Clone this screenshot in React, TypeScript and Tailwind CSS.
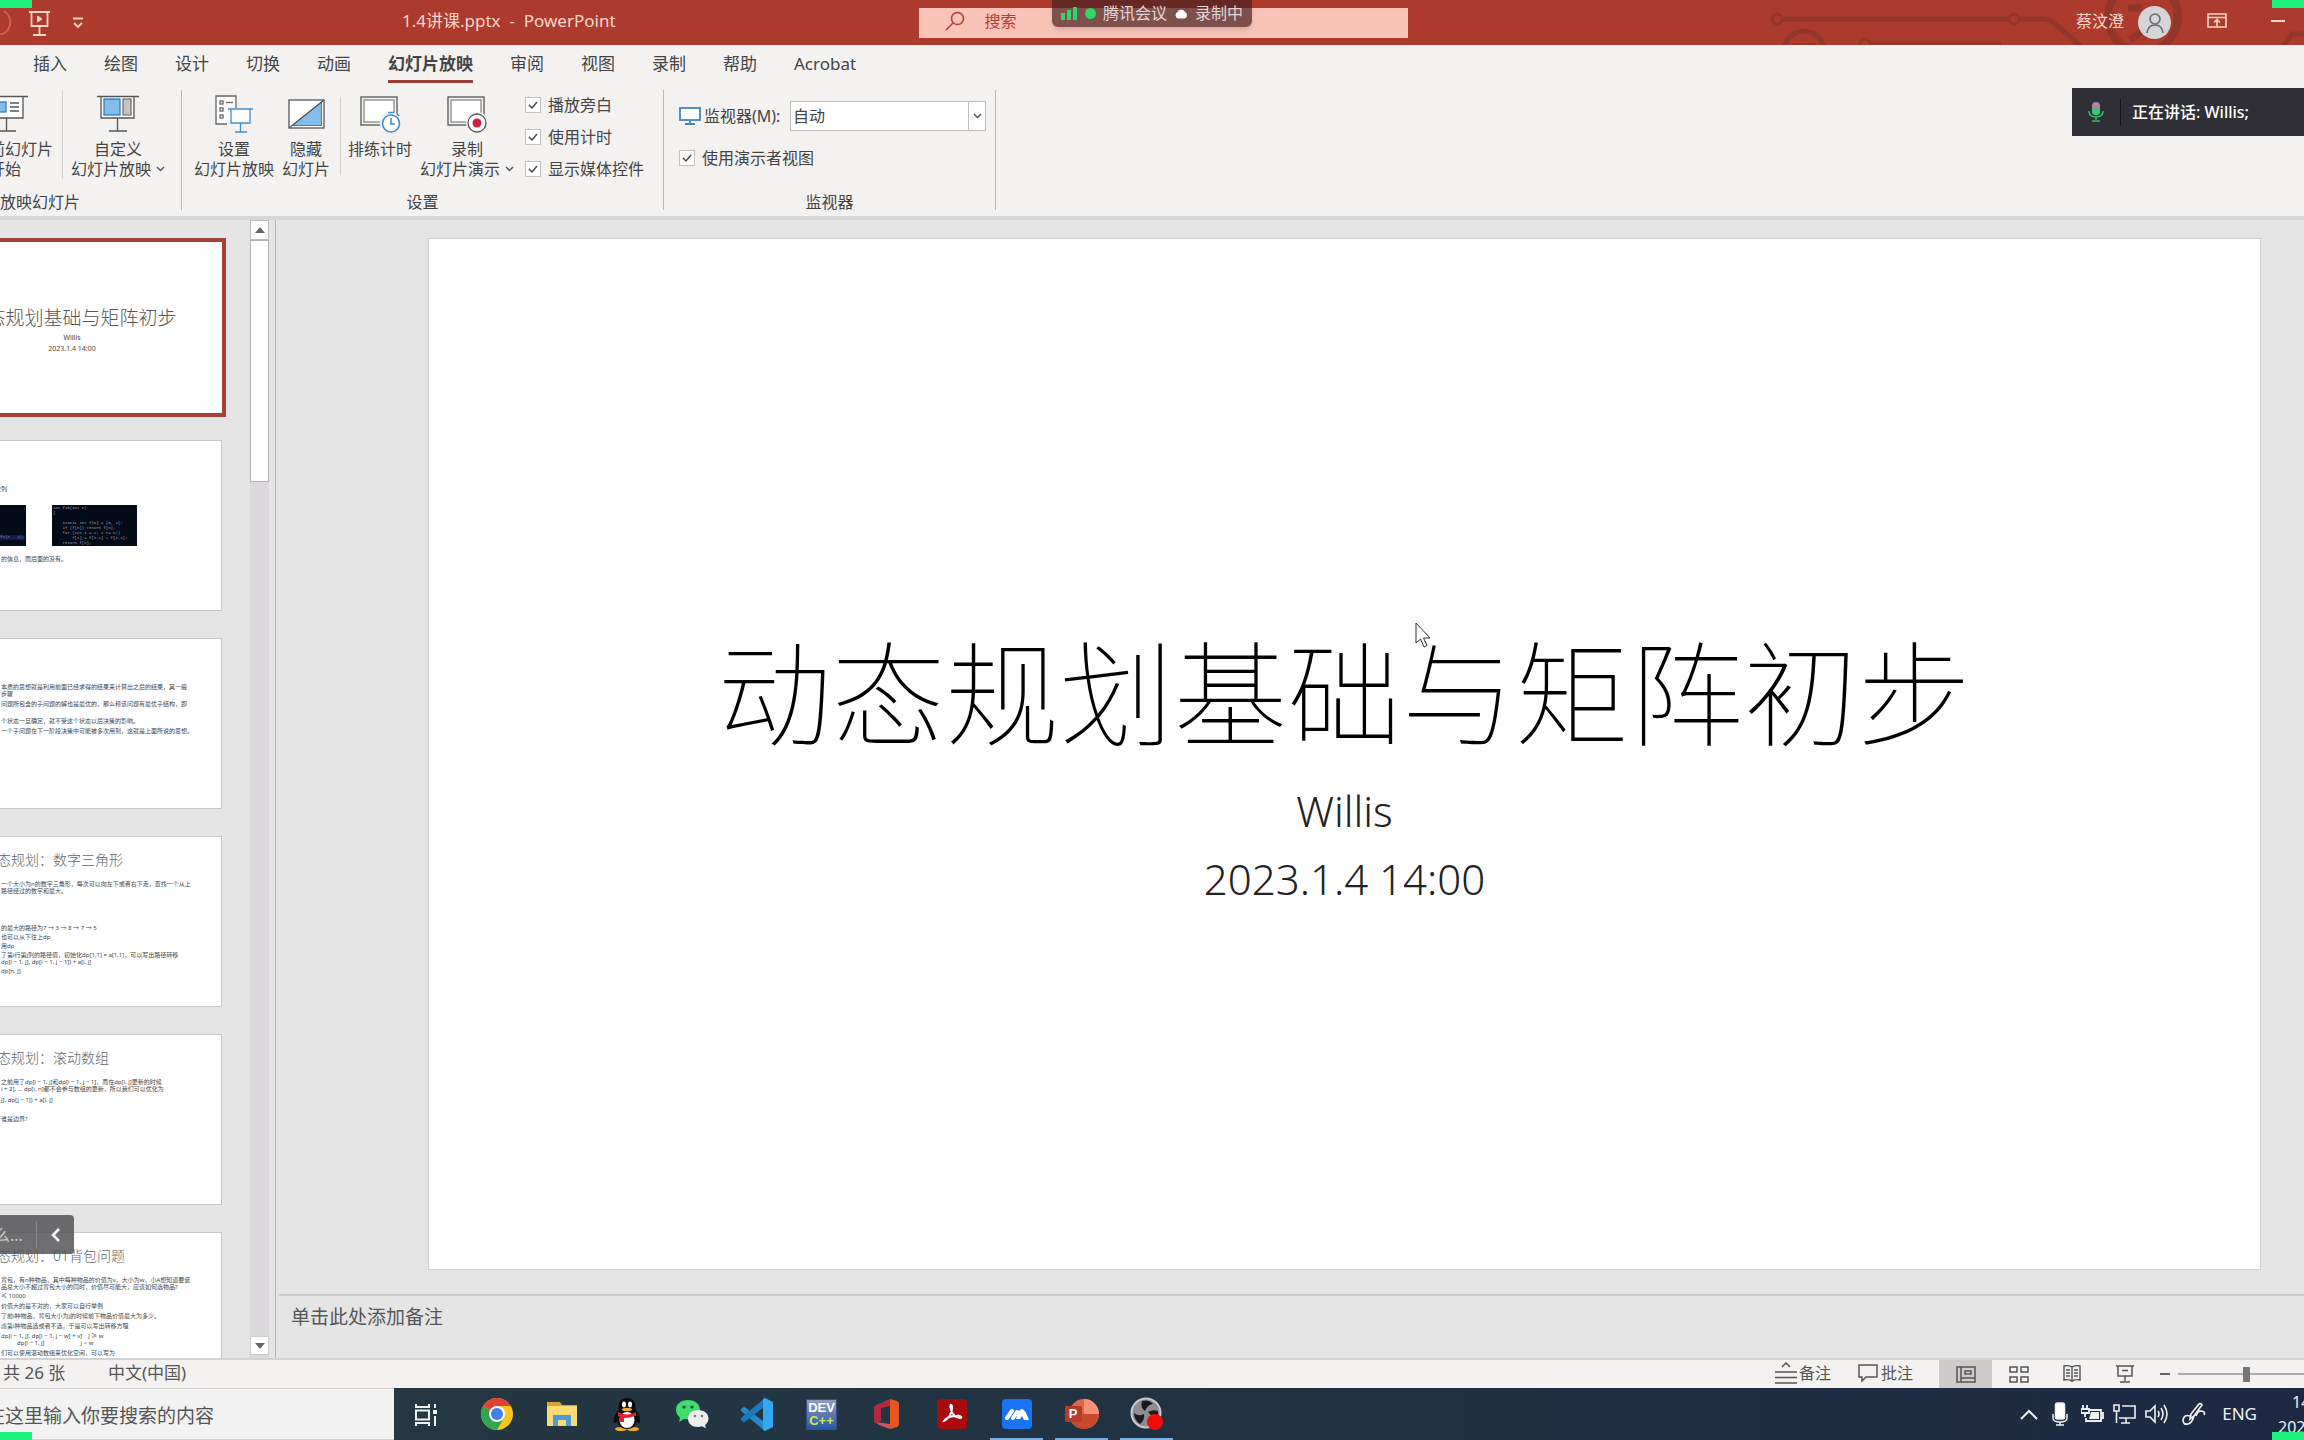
import React, { type ReactNode } from 'react';

const TABS = ['插入', '绘图', '设计', '切换', '动画', '幻灯片放映', '审阅', '视图', '录制', '帮助', 'Acrobat'];

const Caret = ({ className = '' }: { className?: string }) => (
  <svg width="9" height="6" viewBox="0 0 9 6" fill="none" stroke="#555" strokeWidth="1.5" className={className}>
    <path d="M1 1l3.5 3.5L8 1" />
  </svg>
);

function RibbonButton({ icon, lines, caret, className }: { icon: ReactNode; lines: string[]; caret?: boolean; className: string }) {
  return (
    <button className={`flex shrink-0 flex-col items-center whitespace-nowrap pt-[3px] text-[16px] leading-5 ${className}`}>
      <span className="mb-1 flex h-[42px] items-center">{icon}</span>
      {lines.map((line, i) => (
        <span key={line} className="flex items-center gap-[5px]">
          {line}
          {caret && i === lines.length - 1 && <Caret />}
        </span>
      ))}
    </button>
  );
}

function Check({ label }: { label: string }) {
  return (
    <label className="flex h-8 items-center gap-[7px] whitespace-nowrap text-[16px]">
      <span className="relative flex h-4 w-4">
        <input type="checkbox" defaultChecked className="h-4 w-4 appearance-none border border-[#c4c2c0] bg-white" />
        <svg viewBox="0 0 16 16" className="pointer-events-none absolute inset-0" fill="none" stroke="#444" strokeWidth="1.5">
          <path d="M4 8l3 3 5-6" />
        </svg>
      </span>
      {label}
    </label>
  );
}

const BoardIcon = () => (
  <svg width="42" height="38" viewBox="0 0 42 38" fill="none" stroke="#555" strokeWidth="1.3">
    <path d="M4 1.5V23h33V1.5" fill="#fff" />
    <path d="M0 1.5h42M20.5 23v13M12 36h18" />
    <rect x="7" y="4" width="16" height="16" fill="#83bdea" stroke="#2f7cc0" />
    <rect x="26" y="4" width="8" height="16" fill="#c8c4c0" stroke="#77736f" />
  </svg>
);

const FromCurrentIcon = () => (
  <svg width="42" height="38" viewBox="0 0 42 38" fill="none" stroke="#555" strokeWidth="1.3">
    <path d="M4 1.5V23h33V1.5" fill="#fff" />
    <path d="M0 1.5h42M20.5 23v13M12 36h18M24 8h9M24 12h9M24 16h9" />
    <rect x="8" y="7" width="12" height="10" fill="#83bdea" stroke="#2f7cc0" />
  </svg>
);

const SetupIcon = () => (
  <svg width="38" height="38" viewBox="0 0 38 38" fill="none" stroke="#666" strokeWidth="1.3">
    <path d="M12 29H1V1h20v12" fill="#fff" />
    <rect x="5" y="6" width="3" height="3" />
    <rect x="5" y="13" width="3" height="3" />
    <rect x="5" y="20" width="3" height="3" />
    <path d="M11 7.5h7" />
    <g stroke="#3f8fce">
      <path d="M16 14v14h19V14" fill="#fff" />
      <path d="M13 14h25M25.5 28v8.5M20 37h12" />
    </g>
  </svg>
);

const HideIcon = () => (
  <svg width="37" height="30" viewBox="0 0 37 30" fill="none" stroke="#555" strokeWidth="1.3">
    <rect x="1" y="1" width="35" height="28" fill="#fff" />
    <path d="M4 26.5L33.500 3v23.500z" fill="#83bdea" stroke="#2f7cc0" strokeWidth="1" />
    <path d="M1 29L36 1" />
  </svg>
);

const RehearseIcon = () => (
  <svg width="42" height="37" viewBox="0 0 42 37" fill="none" stroke="#555" strokeWidth="1.3">
    <rect x="2" y="1" width="36" height="28" />
    <rect x="5" y="4" width="30" height="22" fill="#fff" stroke="#888" />
    <circle cx="32" cy="27" r="11" fill="#f3f2f1" stroke="none" />
    <circle cx="32" cy="27.500" r="8.500" fill="#fff" stroke="#3f8fce" strokeWidth="1.600" />
    <path d="M32 22v6h4M29 16.500h6M38 18l2 2" stroke="#3f8fce" strokeWidth="1.600" />
  </svg>
);

const RecordIcon = () => (
  <svg width="42" height="37" viewBox="0 0 42 37" fill="none" stroke="#555" strokeWidth="1.3">
    <rect x="2" y="1" width="36" height="28" />
    <rect x="5" y="4" width="30" height="22" fill="#fff" stroke="#888" />
    <circle cx="31" cy="27" r="11" fill="#f3f2f1" stroke="none" />
    <circle cx="31" cy="27" r="9" fill="#fff" />
    <circle cx="31" cy="27" r="4.500" fill="#d0213c" stroke="none" />
  </svg>
);

function TitleBar() {
  return (
    <header className="relative flex h-[45px] shrink-0 overflow-hidden bg-[#ad3b2d] pb-[3px] text-[#fbd5cc]">
      <svg className="absolute right-0 top-0" width="560" height="45" viewBox="1744 0 560 45" fill="none" stroke="#93352a" strokeWidth="5">
        <circle cx="1777" cy="19" r="5" strokeWidth="3" />
        <path d="M1783 19h226M2020 19h24q6 0 12 6l26 22" />
        <circle cx="2014" cy="19" r="5" strokeWidth="3" />
        <circle cx="1804" cy="51" r="20" />
        <path d="M1793 46h22" />
        <circle cx="1865" cy="44" r="5" strokeWidth="3" />
        <path d="M1871 44h130" />
        <circle cx="2143" cy="17" r="35" strokeWidth="8" />
        <path d="M2128 8h14M2146 28l-16 12" strokeWidth="7" />
        <path d="M2282 48l10-14h14" />
      </svg>
      <div className="relative flex flex-1 items-center">
        <svg width="14" height="28" viewBox="0 0 14 28" fill="none" stroke="#d4604f" strokeWidth="2">
          <path d="M4 4a13 13 0 0 1 -5 24" />
        </svg>
        <button aria-label="从头开始" className="ml-[15px] pt-[3px]">
          <svg width="21" height="28" viewBox="0 0 21 28" fill="none" stroke="#fbd5cc" strokeWidth="1.800">
            <path d="M0 3h21M2.500 3v14h16V3M10.500 17v8M4 26h13" />
            <path d="M8.500 7v6l4.500-3z" fill="#fbd5cc" strokeWidth="1" />
          </svg>
        </button>
        <button aria-label="自定义快速访问工具栏" className="ml-[23px] pt-[3px]">
          <svg width="10" height="12" viewBox="0 0 10 12" fill="none" stroke="#fbd5cc" strokeWidth="1.800">
            <path d="M0 1.500h10M1 6l4 4 4-4" />
          </svg>
        </button>
        <h1 className="ml-[319px] whitespace-pre text-[17px] leading-6">1.4讲课.pptx  -  PowerPoint</h1>
      </div>
      <label className="relative ml-[22px] mt-2 flex h-[30px] w-[489px] shrink-0 items-center bg-[#f9c3b7] pb-1 pl-[26px]">
        <svg width="20" height="20" viewBox="0 0 20 20" fill="none" stroke="#b4402f" strokeWidth="1.600">
          <circle cx="12.500" cy="7.500" r="6" />
          <path d="M8 12l-7 7" />
        </svg>
        <input aria-label="搜索" placeholder="搜索" className="ml-5 w-40 bg-transparent text-[16px] placeholder:text-[#b4402f]" />
      </label>
      <div className="relative flex flex-1 items-center justify-end">
        <span className="text-[16px]">蔡汶澄</span>
        <span className="ml-[14px] mt-[3px] flex h-[33px] w-[33px] items-center justify-center rounded-full bg-[#d5d5d8]">
          <svg width="20" height="22" viewBox="0 0 20 22" fill="none" stroke="#666a75" strokeWidth="1.600">
            <circle cx="10" cy="7" r="5" />
            <path d="M2 21q1-8 8-8t8 8" />
          </svg>
        </span>
        <button aria-label="功能区显示选项" className="ml-9">
          <svg width="20" height="16" viewBox="0 0 20 16" fill="none" stroke="#fbd5cc" strokeWidth="1.600">
            <path d="M1 1h18v13H1zM1 4.500h18M10 13V7M7 9.500L10 6.500l3 3" />
          </svg>
        </button>
        <button aria-label="最小化" className="ml-11 mr-[19px] h-[2px] w-[14px] bg-[#fbd5cc]" />
      </div>
    </header>
  );
}

function Group({ label, className, children }: { label: string; className: string; children: ReactNode }) {
  return (
    <section className={`flex h-[120px] shrink-0 flex-col justify-between border-r border-[#b9b7b5] ${className}`}>
      <div className="flex">{children}</div>
      <div className="flex h-4 items-center justify-center whitespace-nowrap text-[16px]">{label}</div>
    </section>
  );
}

function Ribbon() {
  return (
    <div className="shrink-0 border-b-4 border-[#d6d6d6] bg-[#f3f2f1] text-[#444]">
      <nav className="flex h-[45px] gap-[37px] pl-[33px]">
        {TABS.map((t) => (
          <button
            key={t}
            className={`h-[38px] border-b-[3px] pt-[2px] text-[17px] ${t === '幻灯片放映' ? 'border-[#9c3f37] font-bold' : 'border-transparent'}`}
          >
            {t}
          </button>
        ))}
      </nav>
      <div className="flex h-[126px]">
        <Group label="开始放映幻灯片" className="w-[182px] [&>div:last-child]:mr-[101px] [&>div:last-child]:justify-end">
          <div className="flex w-[63px] justify-end border-r border-[#d4d2d0] pr-[12px]">
            <RibbonButton className="w-[90px]" icon={<span className="ml-1"><FromCurrentIcon /></span>} lines={['从当前幻灯片', '开始']} />
          </div>
          <RibbonButton className="ml-2" icon={<BoardIcon />} lines={['自定义', '幻灯片放映']} caret />
        </Group>
        <Group label="设置" className="w-[482px]">
          <RibbonButton className="ml-[12px]" icon={<SetupIcon />} lines={['设置', '幻灯片放映']} />
          <RibbonButton className="ml-2" icon={<HideIcon />} lines={['隐藏', '幻灯片']} />
          <div className="ml-[10px] mt-[7px] h-[78px] w-px bg-[#d4d2d0]" />
          <RibbonButton className="ml-[7px]" icon={<RehearseIcon />} lines={['排练计时']} />
          <RibbonButton className="ml-2" icon={<RecordIcon />} lines={['录制', '幻灯片演示']} caret />
          <div className="ml-[11px] -mt-px">
            <Check label="播放旁白" />
            <Check label="使用计时" />
            <Check label="显示媒体控件" />
          </div>
        </Group>
        <Group label="监视器" className="w-[332px]">
          <div className="ml-[15px] flex flex-col">
            <label className="mt-[11px] flex h-[30px] items-center whitespace-nowrap text-[16px]">
              <svg width="22" height="20" viewBox="0 0 22 20" fill="none" stroke="#3f86c6" strokeWidth="1.800">
                <rect x="1" y="2" width="20" height="12" fill="#fff" />
                <path d="M11 14v4M6 18h10" />
              </svg>
              <span className="ml-[3px] w-[86px]">监视器(M):</span>
              <span className="relative">
                <select className="h-[30px] w-[196px] appearance-none border border-[#c0bebc] bg-white pl-[2px]">
                  <option>自动</option>
                </select>
                <span className="pointer-events-none absolute inset-y-0 right-0 flex w-[18px] items-center justify-center border-l border-[#c0bebc]">
                  <Caret />
                </span>
              </span>
            </label>
            <div className="mt-[11px]">
              <Check label="使用演示者视图" />
            </div>
          </div>
        </Group>
      </div>
    </div>
  );
}

function Thumb({ title, active, children }: { title?: string; active?: boolean; children?: ReactNode }) {
  return (
    <li
      className={`-ml-20 h-[171px] w-[302px] shrink-0 overflow-hidden bg-white text-[6px] leading-[7px] text-[#444] ${
        active ? 'ring-4 ring-[#a34038]' : 'border border-[#c6c6c6]'
      }`}
    >
      {title && <h3 className="mb-[11px] ml-[62px] mt-[13px] text-[14px] font-light leading-5 text-[#666]">{title}</h3>}
      {children}
    </li>
  );
}

const Code = ({ className = '', children }: { className?: string; children?: ReactNode }) => (
  <pre className={`h-[41px] w-[85px] overflow-hidden bg-[#030b18] p-[1px] text-[4px] leading-[5px] text-[#b3a6bd] ${className}`}>{children}</pre>
);

function SlideList() {
  return (
    <aside className="relative flex w-[276px] shrink-0 overflow-hidden border-r border-[#b5b5b5]">
      <ul className="flex w-[250px] flex-col gap-[27px] overflow-hidden pt-[22px]">
        <Thumb active>
          <div className="flex flex-col items-center pl-[2px] pt-[64px]">
            <p className="whitespace-nowrap text-[19px] font-light leading-6 text-[#555]">动态规划基础与矩阵初步</p>
            <p className="mt-[2px] text-[7px] leading-[11px]">Willis</p>
            <p className="text-[7px] leading-[11px]">2023.1.4 14:00</p>
          </div>
        </Thumb>
        <Thumb>
          <p className="ml-[74px] mt-[45px]">数列</p>
          <div className="mt-3 flex gap-[26px] pl-5">
            <Code className="flex items-end pb-[6px]">
              <span className="w-full bg-[#101c4c] pl-14 text-[#8493d8]">dfs(n - 1);</span>
            </Code>
            <Code>{'int fib(int n)\n{\n\n    static int f[N] = {0, 1};\n    if (f[n]) return f[n];\n    for (int i = 2; i <= n;)\n        f[i] = f[i-1] + f[i-2];\n    return f[n];'}</Code>
          </div>
          <p className="ml-[80px] mt-[10px]">的信息，而后面的没有。</p>
        </Thumb>
        <Thumb>
          <div className="ml-[80px] mt-[45px] w-[200px] whitespace-nowrap">
            <p>本质的思想就是利用前面已经求得的结果来计算出之后的结果，其一般</p>
            <p>步骤</p>
            <p className="mt-[3px]">问题所包含的子问题的解也是最优的，那么称该问题有最优子结构，即</p>
            <p className="mt-[10px]">个状态一旦确定，就不受这个状态以后决策的影响。</p>
            <p className="mt-[3px]">一个子问题在下一阶段决策中可能被多次用到，这就是上面所说的思想。</p>
          </div>
        </Thumb>
        <Thumb title="动态规划：数字三角形">
          <div className="ml-[80px] whitespace-nowrap">
            <p>一个大小为n的数字三角形，每次可以向左下或者右下走，查找一个从上</p>
            <p>路径经过的数字和最大。</p>
            <p className="mt-[30px]">的最大的路径为7 → 3 → 8 → 7 → 5</p>
            <p className="mt-[2px]">也可以从下往上dp</p>
            <p className="mt-[2px]">用dp</p>
            <p className="mt-[2px]">了第i行第j列的路径值，初始化dp[1,1] = a[1,1]，可以写出路径转移</p>
            <p>dp[i − 1, j], dp[i − 1, j − 1]) + a[i, j]</p>
            <p className="mt-[2px]">dp[n, j]</p>
          </div>
        </Thumb>
        <Thumb title="动态规划：滚动数组">
          <div className="ml-[80px] whitespace-nowrap">
            <p>之前用了dp[i − 1, j]和dp[i − 1, j − 1]，而在dp[i, j]更新的时候</p>
            <p>i + 2], … dp[i, n]都不会参与数组的更新，所以我们可以优化为</p>
            <p className="mt-[4px]">j], dp[j − 1]) + a[i, j]</p>
            <p className="mt-[12px]">谁是边界?</p>
          </div>
        </Thumb>
        <Thumb title="动态规划：01背包问题">
          <div className="ml-[80px] whitespace-nowrap">
            <p>背包，有n种物品，其中每种物品的价值为v，大小为w，小A想知道要装</p>
            <p>品总大小不超过背包大小的同时，价值尽可能大，应该如何选物品?</p>
            <p className="mt-[2px]">≤ 10000</p>
            <p className="mt-[3px]">价值大的是不对的，大家可以自行举例</p>
            <p className="mt-[3px]">了前i种物品，背包大小为j的时候前下物品价值最大为多少。</p>
            <p className="mt-[3px]">虑第i种物品选或者不选，于是可以写出转移方程</p>
            <p className="mt-[3px]">dp[i − 1, j], dp[i − 1, j − w] + v]　j ≥ w</p>
            <p className="ml-4">dp[i − 1, j]　　　　　　j &lt; w</p>
            <p className="mt-[3px]">们可以使用滚动数组来优化空间，可以写为</p>
          </div>
        </Thumb>
      </ul>
      <div className="flex w-[19px] flex-col bg-[#dcd9dd]">
        <button aria-label="向上滚动" className="flex h-[20px] items-center justify-center border border-[#bbb] bg-white">
          <svg width="10" height="6" fill="#666"><path d="M0 6L5 0l5 6z" /></svg>
        </button>
        <div className="h-[242px] border border-[#b0b0b0] bg-white" />
        <button aria-label="向下滚动" className="mb-[3px] mt-auto flex h-[19px] items-center justify-center border border-[#ccc] bg-white">
          <svg width="10" height="6" fill="#666"><path d="M0 0h10L5 6z" /></svg>
        </button>
      </div>
      {/* meeting chat bubble floating over the thumbnails */}
      <div className="absolute bottom-[104px] left-0 flex h-[39px] w-[74px] items-center rounded-r bg-[#555557]/85 text-[#c9c9c9]">
        <span className="-ml-[6px] w-[42px] text-[16px]">么...</span>
        <span className="h-[27px] w-px bg-[#888]" />
        <svg width="10" height="14" viewBox="0 0 10 14" fill="none" stroke="#fff" strokeWidth="2.500" className="ml-[14px]">
          <path d="M8 1L2 7l6 6" />
        </svg>
      </div>
    </aside>
  );
}

function Editor() {
  return (
    <main className="flex min-w-0 flex-1 flex-col">
      <div className="flex flex-1 pb-6 pl-[152px] pr-[43px] pt-[18px]">
        <article className="relative flex flex-1 flex-col items-center border border-[#cfcfcf] bg-[#fefefe] pt-[370px] text-black">
          <h2 className="whitespace-nowrap text-[114px] font-thin leading-[168px]">动态规划基础与矩阵初步</h2>
          <p className="font-['Noto_Sans'] text-[42px] font-light leading-[68px] text-[#222]">Willis</p>
          <p className="font-['Noto_Sans'] text-[42px] font-light leading-[68px] text-[#222]">2023.1.4 14:00</p>
          <svg className="absolute left-[986px] top-[383px]" width="17" height="26" viewBox="0 0 17 26" fill="#fff" stroke="#333" strokeWidth="1">
            <path d="M1 1v20l4.500-4 3.500 8 3-1.500-3.500-7.500h6.500z" />
          </svg>
        </article>
      </div>
      <div className="ml-[3px] h-[64px] shrink-0 border-t-2 border-[#cbcbcb] pl-[12px] pt-[7px] text-[19px] leading-7 text-[#555]">单击此处添加备注</div>
    </main>
  );
}

function StatusBar() {
  return (
    <footer className="flex h-[30px] shrink-0 items-center border-t-2 border-[#d2d2d2] bg-[#f3f2f1] text-[17px] text-[#555]">
      <span className="ml-[3px] w-[105px] pb-[2px]">共 26 张</span>
      <span className="pb-[2px]">中文(中国)</span>
      <div className="ml-auto flex h-full items-center text-[16px]">
        <button className="flex items-center gap-[2px] pb-[2px]">
          <svg width="22" height="22" viewBox="0 0 22 22" fill="none" stroke="#555" strokeWidth="1.500">
            <path d="M7 5l4-4 4 4M0 10h22M0 15.500h22M0 21h22" />
          </svg>
          备注
        </button>
        <button className="ml-[27px] flex items-center gap-[3px] pb-[2px]">
          <svg width="20" height="20" viewBox="0 0 20 20" fill="none" stroke="#555" strokeWidth="1.500">
            <path d="M1 2h18v12H8l-4 4v-4H1z" />
          </svg>
          批注
        </button>
        <button aria-label="普通视图" className="ml-[26px] flex h-full w-[53px] items-center justify-center bg-[#cfcbca]">
          <svg width="20" height="17" viewBox="0 0 20 17" fill="none" stroke="#555" strokeWidth="1.500">
            <path d="M1 1h18v15H1zM5 1v15M5 12h14" />
            <rect x="9" y="5" width="6" height="3" />
          </svg>
        </button>
        <button aria-label="幻灯片浏览" className="flex w-[53px] justify-center">
          <svg width="20" height="17" viewBox="0 0 20 17" fill="none" stroke="#555" strokeWidth="1.500">
            <path d="M1 1h7v5H1zM12 1h7v5h-7zM1 11h7v5H1zM12 11h7v5h-7z" />
          </svg>
        </button>
        <button aria-label="阅读视图" className="flex w-[53px] justify-center">
          <svg width="18" height="18" viewBox="0 0 18 18" fill="none" stroke="#555" strokeWidth="1.400">
            <path d="M9 2Q5 0 1 1v14q4-1 8 1 4-2 8-1V1Q13 0 9 2v15M3 5h4M3 8h4M3 11h4M11 5h4M11 8h4M11 11h4" />
          </svg>
        </button>
        <button aria-label="幻灯片放映视图" className="flex w-[53px] justify-center">
          <svg width="18" height="18" viewBox="0 0 18 18" fill="none" stroke="#555" strokeWidth="1.500">
            <path d="M0 1h18M2 1v10h14V1M9 11v5M4 17h10M6 5.500h6" />
          </svg>
        </button>
        <button aria-label="缩小" className="ml-[9px] h-[2px] w-[10px] bg-[#666]" />
        <div className="relative ml-2 h-5 w-[126px] overflow-hidden">
          <input
            type="range"
            aria-label="缩放"
            defaultValue={50}
            className="h-5 w-[137px] appearance-none bg-[linear-gradient(#aaa,#aaa)] bg-[length:100%_2px] bg-center bg-no-repeat [&::-webkit-slider-thumb]:h-[15px] [&::-webkit-slider-thumb]:w-[7px] [&::-webkit-slider-thumb]:appearance-none [&::-webkit-slider-thumb]:bg-[#777]"
          />
        </div>
      </div>
    </footer>
  );
}

const APPS: { name: string; open?: boolean; icon: ReactNode }[] = [
  {
    name: 'Chrome',
    icon: (
      <svg width="34" height="34" viewBox="0 0 34 34">
        <circle cx="17" cy="17" r="16" fill="#fbc520" />
        <path d="M17 17L3.100 9A16 16 0 0 0 17 33l7-12z" fill="#34a450" />
        <path d="M17 17L3.100 9a16 16 0 0 1 27.800 0H17z" fill="#dd4436" />
        <circle cx="17" cy="17" r="8" fill="#fff" />
        <circle cx="17" cy="17" r="6" fill="#3f7ee8" />
      </svg>
    ),
  },
  {
    name: '文件资源管理器',
    icon: (
      <svg width="30" height="26" viewBox="0 0 30 26">
        <path d="M0 1h13l2 3h15v8H0z" fill="#d9a32c" />
        <path d="M0 5h30v20H0z" fill="#fadb76" />
        <path d="M6 25V14h18v11h-5v-6h-8v6z" fill="#4a9dd8" />
      </svg>
    ),
  },
  {
    name: 'QQ',
    icon: (
      <svg width="30" height="33" viewBox="0 0 30 33">
        <ellipse cx="9" cy="31" rx="6" ry="2" fill="#f1a92c" />
        <ellipse cx="21" cy="31" rx="6" ry="2" fill="#f1a92c" />
        <path d="M15 0c7 0 9 5 8.500 12 4 5 6 10 4 13-2 0-3-2-3-2-1 5-4 8-9.500 8s-8.500-3-9.500-8c0 0-1 2-3 2-2-3 0-8 4-13C6 5 8 0 15 0z" fill="#0b0b0e" />
        <ellipse cx="15" cy="22" rx="7.500" ry="8" fill="#fff" />
        <ellipse cx="12" cy="6.500" rx="2" ry="3" fill="#fff" />
        <ellipse cx="18" cy="6.500" rx="2" ry="3" fill="#fff" />
        <ellipse cx="15" cy="11.500" rx="5" ry="1.800" fill="#f1a92c" />
        <path d="M6 14q9 5 18 0v3.500q-6 2.500-12 2.500v4H8v-5l-2-1z" fill="#e0202c" />
      </svg>
    ),
  },
  {
    name: '微信',
    icon: (
      <svg width="34" height="30" viewBox="0 0 34 30">
        <path d="M13 1C6 1 1 5 1 11c0 3 2 6 4 8l-1 4 5-3q14 2 16-9C25 5 20 1 13 1z" fill="#41dc70" />
        <circle cx="9" cy="8" r="1.600" fill="#17502c" />
        <circle cx="17" cy="8" r="1.600" fill="#17502c" />
        <path d="M23 11c-6 0-10 3.500-10 8.500S17 28 23 28q2 0 4-.7l4 2-1-3.300c2-1.500 3.500-4 3.500-6.500C33.500 14.500 29 11 23 11z" fill="#eee" />
        <circle cx="20" cy="17" r="1.300" fill="#777" />
        <circle cx="27" cy="17" r="1.300" fill="#777" />
      </svg>
    ),
  },
  {
    name: 'Visual Studio Code',
    icon: (
      <svg width="34" height="33" viewBox="0 0 34 33">
        <path d="M1 11l3-2.500 21 16V33L1 13z" fill="#2489ca" />
        <path d="M1 22l3 2.500 21-16V0L1 20z" fill="#1f78b8" />
        <path d="M25 0l8 4v25l-8 4-2-1V1z" fill="#35a7ee" />
      </svg>
    ),
  },
  {
    name: 'Dev-C++',
    icon: (
      <span className="flex h-[31px] w-[31px] flex-col items-center justify-center border border-[#3a4f86] bg-linear-to-b from-[#8f9ac0] to-[#2459a4] font-['Liberation_Sans'] text-[13px] font-bold leading-[13px] text-white">
        <span>DEV</span>
        <span className="text-[#c9e65a]">C++</span>
      </span>
    ),
  },
  {
    name: 'Office',
    icon: (
      <svg width="26" height="30" viewBox="0 0 26 30">
        <path d="M16 0L2 6q-2 1-2 3v13q0 2 2 2l5-2V9l9-2z" fill="#b3293c" />
        <path d="M2 23l14 2v5l-11-4z" fill="#d8506e" />
        <path d="M16 0l7 2q2 1 2 3v20q0 2-2 3l-7 2z" fill="#e8561f" />
      </svg>
    ),
  },
  {
    name: 'Acrobat',
    icon: (
      <svg width="30" height="30" viewBox="0 0 30 30" fill="none">
        <rect width="30" height="30" rx="4" fill="#a90a0d" />
        <path d="M7 22c4-1 9-9 8-15-1-3-3 0-1 4 2 5 5 8 9 8 3 0 1-3-4-2-5 0-10 2-12 5z" stroke="#fff" strokeWidth="1.800" />
      </svg>
    ),
  },
  {
    name: '腾讯会议',
    open: true,
    icon: (
      <svg width="30" height="30" viewBox="0 0 30 30" fill="none">
        <rect width="30" height="30" rx="4" fill="#1874f5" />
        <path d="M5 19l5-7M11 19l4-6" stroke="#fff" strokeWidth="4" strokeLinecap="round" />
        <path d="M14 20q3-11 6-10 3 0 7 11h-5l-2-4-2 3z" fill="#fff" />
      </svg>
    ),
  },
  {
    name: 'PowerPoint',
    open: true,
    icon: (
      <span className="relative flex h-[30px] w-[34px] items-center">
        <svg width="34" height="30" viewBox="0 0 34 30" className="absolute inset-0">
          <circle cx="19" cy="15" r="15" fill="#e0664a" />
          <path d="M19 0a15 15 0 0 1 15 15H19z" fill="#f98f76" />
          <path d="M4 15h30a15 15 0 0 1-30 0z" fill="#c9492f" />
          <rect y="7" width="17" height="16" rx="1" fill="#b93a2a" />
        </svg>
        <b className="relative w-[17px] text-center font-['Liberation_Sans'] text-[13px] leading-4 text-white">P</b>
      </span>
    ),
  },
  {
    name: 'OBS',
    open: true,
    icon: (
      <svg width="34" height="34" viewBox="0 0 34 34">
        <circle cx="16" cy="16" r="14.500" fill="#8f8d92" stroke="#c9c9cc" strokeWidth="2" />
        <g fill="#1b191d">
          <path d="M15 14q-5-3-3-10 7-2 11 3-5 0-8 7z" />
          <path d="M18 15q5-3 10-1 1 7-5 12 0-7-5-11z" />
          <path d="M14 17q1 6-4 10-6-4-6-11 5 4 10 1z" />
        </g>
        <circle cx="25" cy="25" r="8" fill="#ee0d0d" />
      </svg>
    ),
  },
];

function Taskbar() {
  return (
    <div className="flex h-[52px] shrink-0 bg-linear-to-r from-[#253b42] to-[#1d2943] text-[#eef1f4]">
      <div className="w-[394px] shrink-0 overflow-hidden border-y border-[#d0d0d0] bg-[#f2f2f2]">
        <input
          aria-label="搜索"
          placeholder="在这里输入你要搜索的内容"
          className="-ml-[14px] h-full w-[390px] pt-[3px] text-[19px] text-[#555] placeholder:text-[#555]"
        />
      </div>
      <button aria-label="任务视图" className="flex w-[76px] shrink-0 items-center justify-center pr-3 pt-[2px]">
        <svg width="24" height="22" viewBox="0 0 24 22" fill="none" stroke="#eef1f4" strokeWidth="2">
          <path d="M2 0v3h13V0M2 22v-3h13v3M2 6.500h13v9H2zM21 0v4M21 12v10" />
          <path d="M19 6h4v4h-4z" fill="#eef1f4" stroke="none" />
        </svg>
      </button>
      {APPS.map((app) => (
        <button
          key={app.name}
          aria-label={app.name}
          className={`mr-[12px] flex w-[53px] shrink-0 items-center justify-center border-b-2 pt-[2px] ${app.open ? 'border-[#76b0e0]' : 'border-transparent'}`}
        >
          {app.icon}
        </button>
      ))}
      <div className="ml-auto flex items-center">
        <svg width="18" height="11" viewBox="0 0 18 11" fill="none" stroke="#eef1f4" strokeWidth="2"><path d="M1 10l8-8 8 8" /></svg>
        <svg width="16" height="24" viewBox="0 0 16 24" fill="none" stroke="#eef1f4" strokeWidth="1.500" className="ml-[14px]">
          <rect x="3.500" y="1" width="9" height="16" rx="2" fill="#fff" />
          <path d="M1 12v4q0 4 7 4t7-4v-4M8 20v3M4 23h8" />
        </svg>
        <svg width="23" height="20" viewBox="0 0 23 20" fill="none" stroke="#eef1f4" strokeWidth="1.800" className="ml-[13px]">
          <path d="M2 1v4M6 1v4M0 5h8v4H0zM4 9v4M9 6h11v11H5v-3M20 9h2v5h-2" />
          <path d="M10 8h8v7H8z" fill="#eef1f4" stroke="none" />
        </svg>
        <svg width="23" height="20" viewBox="0 0 23 20" fill="none" stroke="#eef1f4" strokeWidth="1.600" className="ml-[9px]">
          <path d="M9 2h13v12H6M1 1h5v6H1zM3.500 7v12M13 14v5M8 19h9" />
        </svg>
        <svg width="24" height="20" viewBox="0 0 24 20" fill="none" stroke="#eef1f4" strokeWidth="1.600" className="ml-[9px]">
          <path d="M1 7h4l5-5v16l-5-5H1zM13 7q2 3 0 6M16 4q4 6 0 12M19 1q6 9 0 18" />
        </svg>
        <svg width="24" height="24" viewBox="0 0 24 24" fill="none" stroke="#eef1f4" strokeWidth="1.700" className="ml-[13px]">
          <path d="M8 17l1-5 8-10q2-1 3 1l-8 11zM8 14q-6-2-7 4 0 5 5 4 4-1 6-8M14 14q1-4 4-5 6 0 4 4" />
        </svg>
        <span className="ml-4 text-[17px]">ENG</span>
        <div className="ml-[21px] w-[26px] overflow-hidden whitespace-nowrap pt-[2px] text-[16px] leading-[25px]">
          <div className="pl-[14px]">14</div>
          <div>2023</div>
        </div>
      </div>
    </div>
  );
}

const CORNERS = ['left-0 top-0', 'right-0 top-0', 'bottom-0 left-0', 'right-0 bottom-0'];

export default function App() {
  return (
    <div className="relative flex h-screen flex-col overflow-hidden bg-[#e5e5e5] font-['Noto_Sans','Noto_Sans_CJK_SC',sans-serif]">
      <TitleBar />
      <Ribbon />
      <div className="flex min-h-0 flex-1">
        <SlideList />
        <Editor />
      </div>
      <StatusBar />
      <Taskbar />

      {/* screen share overlays */}
      <div className="absolute left-1/2 top-0 ml-[-100px] flex h-[27px] w-[200px] items-center rounded-b-md bg-[#48201e]/70 pb-[1px] pl-[9px] text-[16px] text-[#e3d5d4] shadow-md">
        <svg width="17" height="13" fill="#2fd765"><path d="M0 6h4v7H0zM6 3h4v10H6zM12 0h4v13h-4z" /></svg>
        <span className="ml-[7px] h-[11px] w-[11px] rounded-full bg-[#2fd765]" />
        <span className="ml-[7px]">腾讯会议</span>
        <svg width="14" height="11" viewBox="0 0 14 11" fill="#fff" className="mx-[7px]"><path d="M4 10.500a3.500 3.500 0 0 1-.5-6.500 4 4 0 0 1 7.500 0 3.500 3.500 0 0 1-.5 6.500z" /></svg>
        <span>录制中</span>
      </div>
      <div className="absolute right-0 top-[88px] flex h-12 w-[232px] items-center bg-[#2f2f35] text-[16px] font-medium text-white">
        <svg width="16" height="20" viewBox="0 0 16 20" fill="none" stroke="#37b865" strokeWidth="1.600" className="ml-4">
          <rect x="4" y="0" width="8" height="13" rx="4" fill="#9c8f9c" stroke="none" />
          <path d="M4 7h8v2a4 4 0 0 1-8 0z" fill="#2ecc71" stroke="none" />
          <path d="M1 9q0 6 7 6t7-6M8 15v3M4 19h8" />
        </svg>
        <span className="ml-4 h-[27px] w-px bg-[#131316]" />
        <span className="ml-[11px]">正在讲话: Willis;</span>
      </div>
      {CORNERS.map((pos) => (
        <div key={pos} className={`absolute h-2 w-8 bg-[#1ef07e] ${pos}`} />
      ))}
    </div>
  );
}
